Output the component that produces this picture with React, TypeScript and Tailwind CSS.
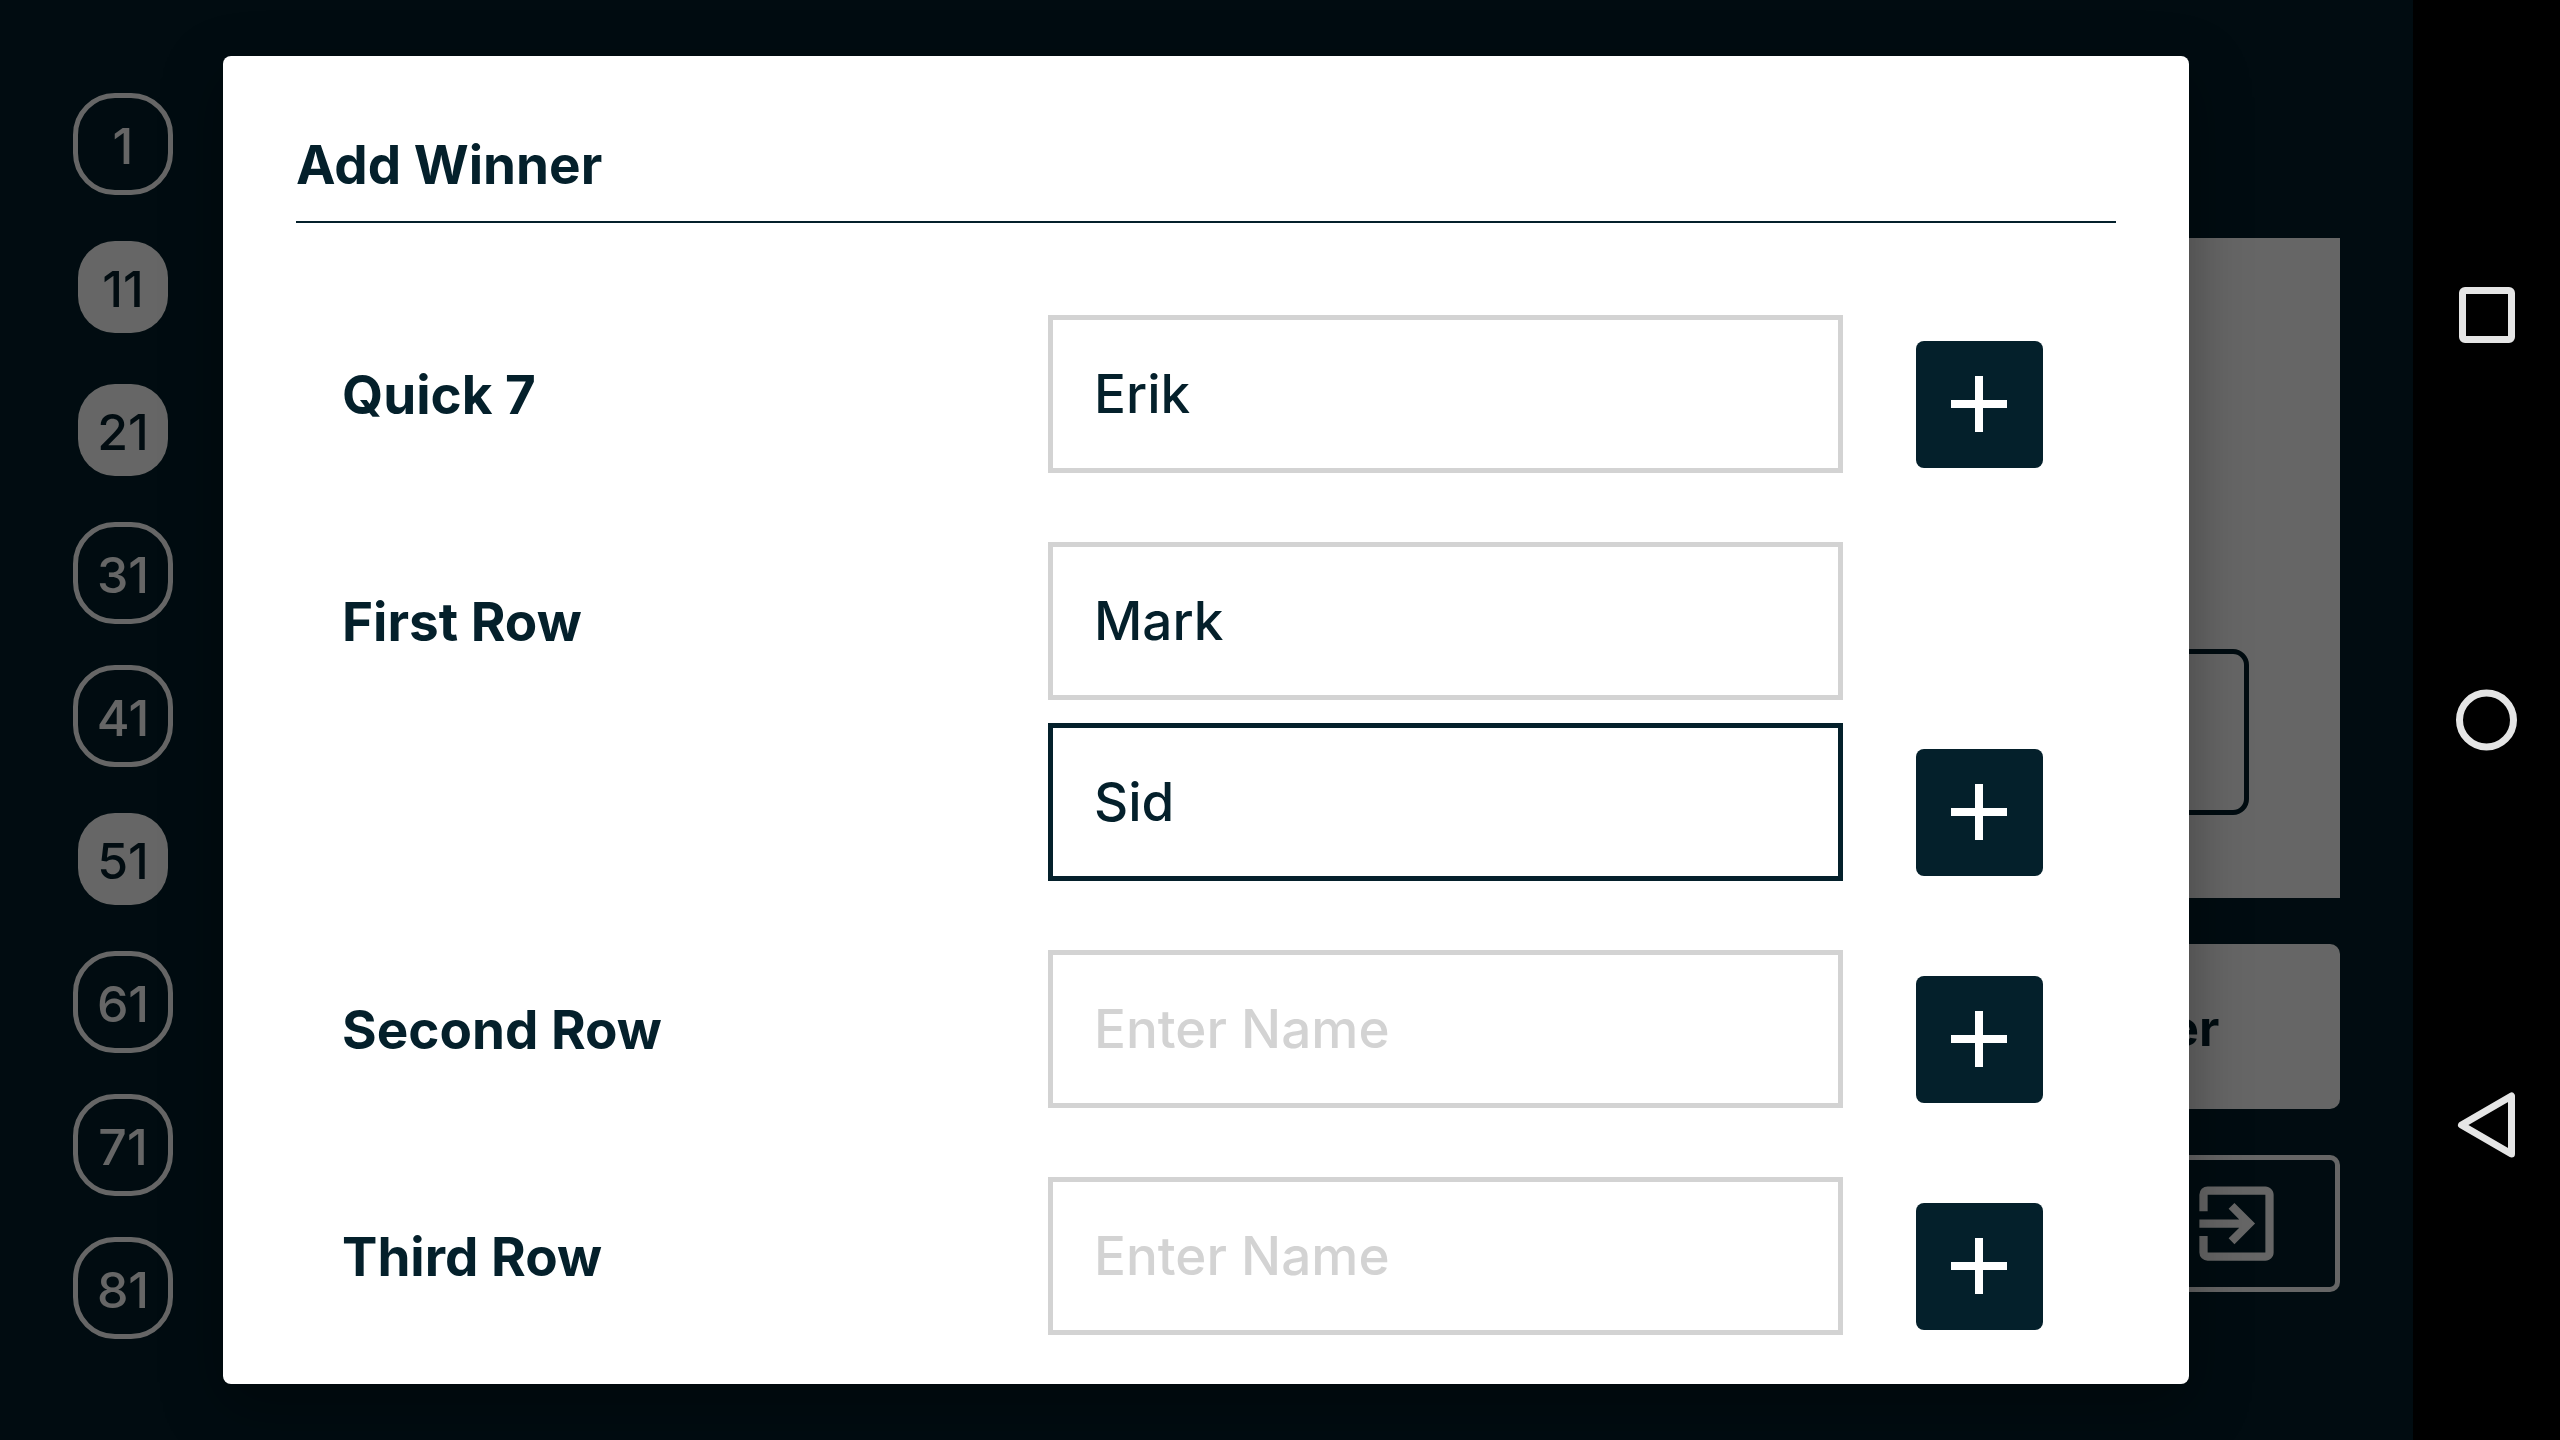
import { MdAdd, MdExitToApp } from "react-icons/md";

type Prize = { id: string; label: string; winners: string[]; active?: number };

const prizes: Prize[] = [
  { id: "quick-7", label: "Quick 7", winners: ["Erik"] },
  { id: "first-row", label: "First Row", winners: ["Mark", "Sid"], active: 1 },
  { id: "second-row", label: "Second Row", winners: [""] },
  { id: "third-row", label: "Third Row", winners: [""] },
];

const numbers = [
  { value: 1, called: false },
  { value: 11, called: true },
  { value: 21, called: true },
  { value: 31, called: false },
  { value: 41, called: false },
  { value: 51, called: true },
  { value: 61, called: false },
  { value: 71, called: false },
  { value: 81, called: false },
];

const NumberBall = ({ value, called }: { value: number; called: boolean }) => (
  <li
    className={`flex h-[102px] w-[100px] items-center justify-center rounded-[42px] border-[5px] pt-1 text-[50px] font-medium ${
      called
        ? "border-transparent bg-white bg-clip-padding text-[#04202b]"
        : "border-white text-white"
    }`}
  >
    {value}
  </li>
);

const Board = () => (
  <div className="flex min-h-screen justify-between bg-[#04202b] px-[73px]">
    <ul className="flex flex-col gap-[41px] pt-[93px]">
      {numbers.map((n) => (
        <NumberBall key={n.value} value={n.value} called={n.called} />
      ))}
    </ul>
    {/* SIDE PANEL */}
    <div className="flex w-[530px] flex-col pt-[238px]">
      <div className="flex h-[660px] flex-col justify-end bg-white px-[91px] pb-[83px]">
        <div className="h-[166px] rounded-2xl border-[5px] border-[#04202b]" />
      </div>
      <button className="mt-[46px] h-[165px] rounded-[10px] bg-white pt-1 text-[50px] font-bold text-[#04202b]">
        Add Winner
      </button>
      <button
        aria-label="Exit game"
        className="mt-[46px] flex h-[137px] items-center justify-end rounded-[10px] border-[5px] border-white pr-[49px] text-white"
      >
        <MdExitToApp size={99} />
      </button>
    </div>
  </div>
);

const PrizeRow = ({ prize }: { prize: Prize }) => (
  <div className="grid grid-cols-[633fr_795fr_127px] gap-x-[73px]">
    <label
      htmlFor={`${prize.id}-0`}
      className="flex h-[158px] items-center pt-1 text-[53px] font-bold"
    >
      {prize.label}
    </label>
    <div className="flex flex-col gap-[23px]">
      {prize.winners.map((winner, i) => (
        <input
          key={i}
          id={`${prize.id}-${i}`}
          aria-label={`${prize.label} winner ${i + 1}`}
          type="text"
          placeholder="Enter Name"
          defaultValue={winner}
          className={`h-[158px] w-full border-[5px] px-[41px] text-[53px] font-medium outline-none placeholder:text-[#d3d3d3] ${
            prize.active === i ? "border-[#04202b]" : "border-[#d3d3d3]"
          }`}
        />
      ))}
    </div>
    <button
      aria-label={`Add ${prize.label} winner`}
      className="mb-[5px] flex h-[127px] items-center justify-center self-end rounded-lg bg-[#04202b] pr-px pb-px text-white"
    >
      <MdAdd size={96} />
    </button>
  </div>
);

const WinnerDialog = () => (
  <div
    role="dialog"
    aria-labelledby="dialog-title"
    className="flex-1 overflow-hidden rounded-lg bg-white px-[73px] pt-[73px] text-[#04202b] shadow-[0_20px_60px_rgba(0,0,0,0.35)]"
  >
    <h1
      id="dialog-title"
      className="border-b-2 border-[#04202b] pb-5 text-[53px] leading-[72px] font-bold"
    >
      Add Winner
    </h1>
    <form className="flex flex-col gap-[69px] pt-[92px] pr-[73px] pl-[46px]">
      {prizes.map((prize) => (
        <PrizeRow key={prize.id} prize={prize} />
      ))}
    </form>
  </div>
);

const SystemNav = () => (
  <nav className="flex w-[147px] flex-col bg-black py-28 text-[#e5e5e5]">
    <button aria-label="Recent apps" className="flex flex-1 items-center justify-center">
      <svg width="64" height="64" viewBox="0 0 64 64" fill="none" stroke="currentColor" strokeWidth="7">
        <rect x="7.5" y="7.5" width="49" height="49" rx="2.5" />
      </svg>
    </button>
    <button aria-label="Home" className="flex flex-1 items-center justify-center">
      <svg width="64" height="64" viewBox="0 0 64 64" fill="none" stroke="currentColor" strokeWidth="7">
        <circle cx="31.5" cy="32" r="27" />
      </svg>
    </button>
    <button aria-label="Back" className="flex flex-1 items-center justify-center">
      <svg
        width="64"
        height="68"
        viewBox="0 0 64 68"
        fill="none"
        stroke="currentColor"
        strokeWidth="7"
        strokeLinejoin="round"
      >
        <path d="M56.500 5v58L6.500 34z" />
      </svg>
    </button>
  </nav>
);

const App = () => {
  return (
    <div className="flex min-h-screen bg-black font-['Inter',sans-serif]">
      <main className="relative flex-1">
        <Board />
        {/* MODAL */}
        <div className="absolute inset-0 flex bg-black/60 py-14 pr-56 pl-[223px]">
          <WinnerDialog />
        </div>
      </main>
      <SystemNav />
    </div>
  );
};

export default App;
